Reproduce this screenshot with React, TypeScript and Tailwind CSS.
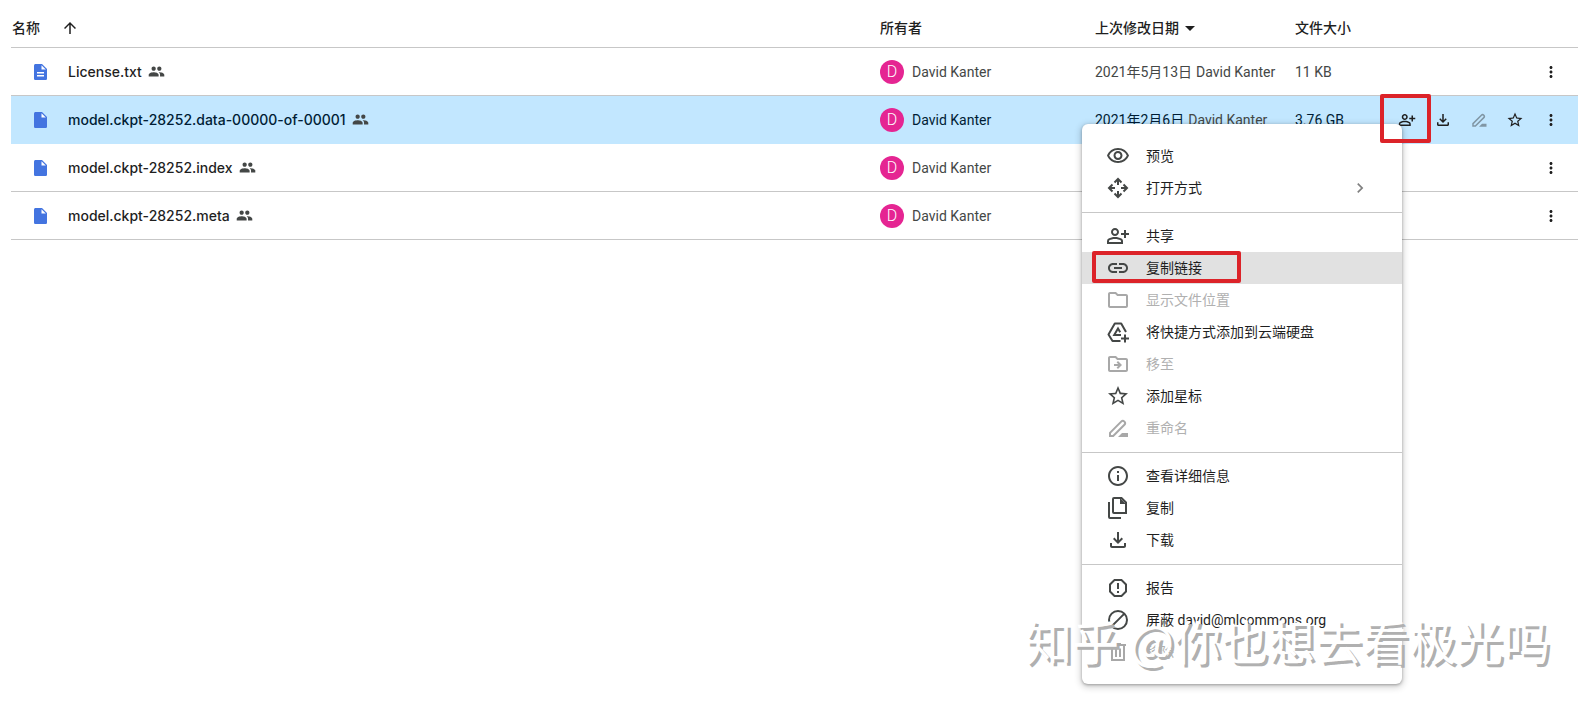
import type { ReactNode } from "react";
import clsx from "clsx";
import {
  MdArrowDropDown,
  MdArrowUpward,
  MdChevronRight,
  MdLink,
  MdMoreVert,
  MdOutlineDriveFileMove,
  MdOutlineFileDownload,
  MdOutlineFolder,
  MdOutlineInfo,
  MdOutlinePersonAddAlt,
  MdOutlineVisibility,
  MdPeople,
  MdStarBorder,
} from "react-icons/md";

interface DriveFile {
  name: string;
  modified: string;
  size: string;
  text?: boolean;
  selected?: boolean;
}

const files: DriveFile[] = [
  { name: "License.txt", modified: "2021年5月13日", size: "11 KB", text: true },
  { name: "model.ckpt-28252.data-00000-of-00001", modified: "2021年2月6日", size: "3.76 GB", selected: true },
  { name: "model.ckpt-28252.index", modified: "", size: "" },
  { name: "model.ckpt-28252.meta", modified: "", size: "" },
];

function FileIcon({ text }: { text?: boolean }) {
  return (
    <svg viewBox="0 0 13 16" className="h-4 w-[13px] shrink-0">
      <path d="M1.6 0H8l5 5v9.4c0 .9-.7 1.6-1.6 1.6H1.6C.7 16 0 15.3 0 14.4V1.6C0 .7.7 0 1.6 0z" fill="#4374e0" />
      <path d="M7.5 1.2v4.3h4.3z" fill="#fff" />
      {text && <path d="M3 8h7v1.5H3zM3 11h7v1.5H3z" fill="#fff" />}
    </svg>
  );
}

function StrokeIcon({ className = "size-6", children }: { className?: string; children: ReactNode }) {
  return (
    <svg viewBox="0 0 24 24" className={className} fill="none" stroke="currentColor" strokeWidth="2">
      {children}
    </svg>
  );
}

function OpenWithIcon() {
  return (
    <StrokeIcon>
      <path d="M8.5 6.5 12 3l3.5 3.5M8.5 17.5 12 21l3.5-3.5M6.5 8.5 3 12l3.5 3.5M17.5 8.5 21 12l-3.5 3.5" />
      <path d="M12 3.5V9M12 15v5.5M3.5 12H9M15 12h5.5" />
    </StrokeIcon>
  );
}

function AddToDriveIcon() {
  return (
    <StrokeIcon>
      <path d="M14.5 21h-8l-4-6.5L8.8 3.5h6.4L20 12" strokeLinejoin="round" />
      <path d="M15 15H8.2L12 8.5l2.2 3.8" />
      <path d="M19 14.5v8M15 18.5h8" />
    </StrokeIcon>
  );
}

function RenameIcon({ className }: { className?: string }) {
  return (
    <StrokeIcon className={className}>
      <path d="M4 20v-3.2L15.2 5.6q1.6-1.6 3.2 0t0 3.2L7.2 20z" />
      <path d="M12 21l4-4h6v4z" fill="currentColor" stroke="none" />
    </StrokeIcon>
  );
}

function CopyIcon() {
  return (
    <StrokeIcon>
      <path d="M8 2h7.5L20 6.5V17H8q-1 0-1-1V3q0-1 1-1z" />
      <path d="M14 2v6h6z" fill="currentColor" stroke="none" />
      <path d="M3 6v15q0 1 1 1h11" />
    </StrokeIcon>
  );
}

function ReportIcon() {
  return (
    <StrokeIcon>
      <path d="M8.5 4h7L20 8.5v7L15.5 20h-7L4 15.5v-7z" />
      <path d="M12 7v6M12 15v2" />
    </StrokeIcon>
  );
}

function BlockIcon() {
  return (
    <StrokeIcon>
      <circle cx="12" cy="12" r="9" />
      <path d="M5.6 18.4 18.4 5.6" />
    </StrokeIcon>
  );
}

function TrashIcon() {
  return (
    <StrokeIcon>
      <path d="M4 5h16M9 4h6M6 5v15h12V5M10 8.5V17M14 8.5V17" />
    </StrokeIcon>
  );
}

interface MenuItem {
  label: string;
  icon: ReactNode;
  disabled?: boolean;
  active?: boolean;
  submenu?: boolean;
}

const menuGroups: MenuItem[][] = [
  [
    { label: "预览", icon: <MdOutlineVisibility className="size-6" /> },
    { label: "打开方式", icon: <OpenWithIcon />, submenu: true },
  ],
  [
    { label: "共享", icon: <MdOutlinePersonAddAlt className="size-6" /> },
    { label: "复制链接", icon: <MdLink className="size-6" />, active: true },
    { label: "显示文件位置", icon: <MdOutlineFolder className="size-6" />, disabled: true },
    { label: "将快捷方式添加到云端硬盘", icon: <AddToDriveIcon /> },
    { label: "移至", icon: <MdOutlineDriveFileMove className="size-6" />, disabled: true },
    { label: "添加星标", icon: <MdStarBorder className="size-6" /> },
    { label: "重命名", icon: <RenameIcon />, disabled: true },
  ],
  [
    { label: "查看详细信息", icon: <MdOutlineInfo className="size-6" /> },
    { label: "复制", icon: <CopyIcon /> },
    { label: "下载", icon: <MdOutlineFileDownload className="size-6" /> },
  ],
  [
    { label: "报告", icon: <ReportIcon /> },
    { label: "屏蔽 david@mlcommons.org", icon: <BlockIcon /> },
    { label: "移除", icon: <TrashIcon />, disabled: true },
  ],
];

function IconButton({ label, disabled, children }: { label: string; disabled?: boolean; children: ReactNode }) {
  return (
    <button
      type="button"
      aria-label={label}
      disabled={disabled}
      className="flex size-9 items-center justify-center disabled:opacity-40"
    >
      {children}
    </button>
  );
}

function FileRow({ file }: { file: DriveFile }) {
  return (
    <tr
      className={clsx(
        "h-12 *:border-b",
        file.selected ? "bg-[#c2e7ff] text-[#001d35] *:border-[#c2e7ff]" : "text-[#444746] *:border-[#c7c7c7]"
      )}
    >
      <td>
        <div className="flex items-center pl-[23px]">
          <FileIcon text={file.text} />
          <span className={clsx("ml-[21px] font-[Inter] font-medium", !file.selected && "text-[#1f1f1f]")}>
            {file.name}
          </span>
          <MdPeople className="ml-1.5 size-[17px] text-[#444746]" />
        </div>
      </td>
      <td>
        <div className="flex items-center gap-2">
          <span className="flex size-6 items-center justify-center rounded-full bg-[#e52592] text-base font-light text-white">
            D
          </span>
          David Kanter
        </div>
      </td>
      <td>
        {file.modified && (
          <div className="flex gap-1">
            {file.modified}
            <span className="text-[#444746]">David Kanter</span>
          </div>
        )}
      </td>
      <td>{file.size}</td>
      <td>
        <div className="flex justify-end pr-[9px] text-[#1f1f1f]">
          {file.selected && (
            <>
              <IconButton label="共享">
                <MdOutlinePersonAddAlt className="size-[18px]" />
              </IconButton>
              <IconButton label="下载">
                <MdOutlineFileDownload className="size-[18px]" />
              </IconButton>
              <IconButton label="重命名" disabled>
                <RenameIcon className="size-[18px]" />
              </IconButton>
              <IconButton label="添加星标">
                <MdStarBorder className="size-[18px]" />
              </IconButton>
            </>
          )}
          <IconButton label="更多操作">
            <MdMoreVert className="size-[18px]" />
          </IconButton>
        </div>
      </td>
    </tr>
  );
}

function ContextMenu() {
  return (
    <div
      role="menu"
      className="absolute top-[124px] right-[190px] w-80 rounded-md bg-white py-2 shadow-[0_2px_6px_2px_rgba(0,0,0,0.15),0_1px_3px_rgba(0,0,0,0.3)]"
    >
      {menuGroups.map((group, index) => (
        <div key={index} className={clsx("pb-2", index === 0 ? "pt-2" : "border-t border-[#c7c7c7] pt-[7px]")}>
          {group.map((item) => (
            <button
              key={item.label}
              type="button"
              role="menuitem"
              disabled={item.disabled}
              className={clsx(
                "relative flex h-8 w-full items-center gap-4 pr-8 pl-6 text-left",
                item.active && "bg-[#e1e1e1]",
                item.disabled ? "text-[#b0b0b0]" : "text-[#1f1f1f]"
              )}
            >
              <span className={item.disabled ? "text-[#a8a8a8]" : "text-[#444746]"}>{item.icon}</span>
              {item.label}
              {item.submenu && <MdChevronRight className="ml-auto size-5 text-[#808080]" />}
              {item.active && (
                <span className="absolute -top-px left-[10px] h-8 w-[149px] rounded-xs border-4 border-[#dc2329]" />
              )}
            </button>
          ))}
        </div>
      ))}
    </div>
  );
}

export default function App() {
  return (
    <div className="relative min-h-screen overflow-hidden bg-white pr-[14px] pl-[11px] font-[Roboto,'Noto_Sans_CJK_SC',sans-serif] text-sm">
      <table className="w-full table-fixed border-separate border-spacing-0 text-left">
        <colgroup>
          <col />
          <col className="w-[215px]" />
          <col className="w-[200px]" />
          <col className="w-[86px]" />
          <col className="w-[197px]" />
        </colgroup>
        <thead>
          <tr className="h-12 text-[#1f1f1f] *:border-b *:border-[#c7c7c7] *:p-0 *:pt-2 *:font-medium">
            <th>
              <div className="flex items-center gap-[21px] pl-px">
                名称
                <MdArrowUpward className="size-[18px]" />
              </div>
            </th>
            <th>所有者</th>
            <th>
              <div className="flex h-5 items-center">
                上次修改日期
                <MdArrowDropDown className="-ml-px size-6" />
              </div>
            </th>
            <th>文件大小</th>
            <th />
          </tr>
        </thead>
        <tbody>
          {files.map((file) => (
            <FileRow key={file.name} file={file} />
          ))}
        </tbody>
      </table>

      <ContextMenu />

      <div className="absolute top-[94px] right-[161px] h-[49px] w-[51px] rounded-xs border-4 border-[#dc2329]" />

      <p className="absolute right-[42px] bottom-[46px] font-['Noto_Sans_CJK_SC',sans-serif] text-[47px] leading-none whitespace-nowrap text-white [text-shadow:3px_3px_0_#b0b0b0]">
        知乎 @你也想去看极光吗
      </p>
    </div>
  );
}
